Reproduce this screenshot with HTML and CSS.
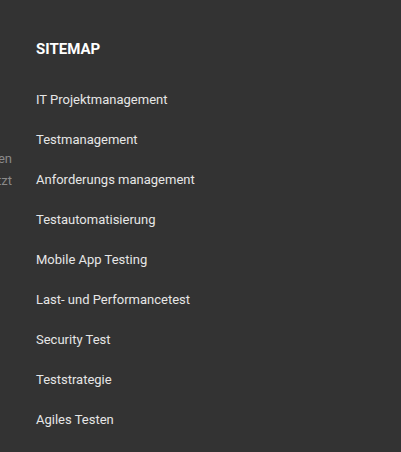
FILE: index.html
```html
<!DOCTYPE html>
<html lang="de">
<head>
<meta charset="utf-8">
<title>Sitemap</title>
<link rel="stylesheet" href="styles.css">
</head>
<body>
<div class="footer">
  <div class="about">
    <p class="about-line"><span>Software testen</span></p>
    <p class="about-line"><span>Kontaktieren Sie uns jetzt</span></p>
  </div>
  <nav class="sitemap">
    <h2 class="sitemap-title">SITEMAP</h2>
    <ul class="sitemap-list">
      <li><a href="#">IT Projektmanagement</a></li>
      <li><a href="#">Testmanagement</a></li>
      <li><a href="#">Anforderungs management</a></li>
      <li><a href="#">Testautomatisierung</a></li>
      <li><a href="#">Mobile App Testing</a></li>
      <li><a href="#">Last- und Performancetest</a></li>
      <li><a href="#">Security Test</a></li>
      <li><a href="#">Teststrategie</a></li>
      <li><a href="#">Agiles Testen</a></li>
    </ul>
  </nav>
</div>
</body>
</html>
```
FILE: styles.css
```css
html, body {
  margin: 0;
  padding: 0;
  background: #333333;
  height: 100%;
}
body {
  font-family: Roboto, "Liberation Sans", Arial, sans-serif;
  overflow: hidden;
}
.footer {
  display: flex;
  gap: 24px;
  height: 452px;
}
.about {
  width: 12px;
  overflow: hidden;
  padding-top: 148px;
}
.about-line {
  margin: 0;
  display: flex;
  justify-content: flex-end;
  white-space: nowrap;
  font-size: 13px;
  line-height: 22px;
  color: #8a8a8a;
}
.sitemap {
  padding-top: 39px;
}
.sitemap-title {
  margin: 0 0 31px;
  font-size: 15px;
  line-height: 20px;
  font-weight: 700;
  color: #ffffff;
}
.sitemap-list {
  list-style: none;
  margin: 0;
  padding: 0;
  display: flex;
  flex-direction: column;
  gap: 20px;
}
.sitemap-list a {
  display: block;
  font-size: 13px;
  line-height: 20px;
  color: #e6e6e6;
  text-decoration: none;
}
```
